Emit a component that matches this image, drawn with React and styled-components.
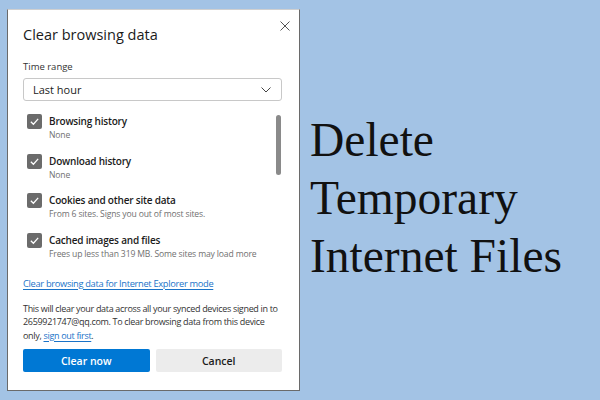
import React from "react";
import styled, { createGlobalStyle } from "styled-components";

const GlobalStyle = createGlobalStyle`
  html, body {
    margin: 0;
    padding: 0;
    background: #a3c3e5;
  }
  * { box-sizing: border-box; }
`;

const Page = styled.div`
  width: 600px;
  height: 400px;
  display: flex;
  align-items: flex-start;
  background: #a3c3e5;
  overflow: hidden;
`;

const Dialog = styled.div`
  position: relative;
  width: 293px;
  height: 382px;
  margin: 9px 0 0 7px;
  background: #fff;
  border: 1px solid #6a6a6a;
  border-top-color: #d0d0d0;
  padding: 15px 17px 0 15px;
  font-family: "Open Sans", "Noto Sans", sans-serif;
  color: #1b1b1b;
  display: flex;
  flex-direction: column;
`;

const CloseButton = styled.button`
  position: absolute;
  top: 7px;
  right: 5px;
  width: 18px;
  height: 18px;
  padding: 0;
  border: none;
  background: none;
  display: flex;
  align-items: center;
  justify-content: center;
`;

const Title = styled.h2`
  margin: 0;
  font-size: 14.5px;
  font-weight: 400;
  line-height: 20px;
  color: #1b1b1b;
`;

const FieldLabel = styled.div`
  margin-top: 15px;
  font-size: 9.5px;
  line-height: 13px;
  color: #333;
`;

const SelectBox = styled.div`
  margin-top: 5px;
  height: 23px;
  border: 1px solid #c8c8c8;
  border-radius: 3px;
  display: flex;
  align-items: center;
  justify-content: space-between;
  padding: 0 10px 0 9px;
  font-size: 11px;
  color: #1b1b1b;
`;

const ListArea = styled.div`
  position: relative;
  margin-top: 13px;
  display: flex;
  flex-direction: column;
  gap: 12.5px;
`;

const ScrollThumb = styled.div`
  position: absolute;
  right: 1px;
  top: 1px;
  width: 5px;
  height: 60px;
  border-radius: 3px;
  background: #8a8a8a;
`;

const Row = styled.div`
  display: flex;
  align-items: flex-start;
  gap: 7px;
  padding-left: 4px;
`;

const Box = styled.div`
  width: 15px;
  height: 15px;
  border-radius: 2px;
  background: #6b6b6b;
  display: flex;
  align-items: center;
  justify-content: center;
  flex-shrink: 0;
`;

const RowText = styled.div`
  display: flex;
  flex-direction: column;
`;

const RowTitle = styled.div`
  font-size: 10px;
  font-weight: 600;
  line-height: 15px;
  letter-spacing: -0.2px;
  color: #1b1b1b;
`;

const RowSub = styled.div`
  font-size: 8.6px;
  line-height: 12px;
  letter-spacing: -0.15px;
  color: #707070;
`;

const Link = styled.a`
  margin-top: 17px;
  font-size: 9.3px;
  font-weight: 500;
  line-height: 13px;
  letter-spacing: -0.32px;
  color: #1a73c8;
  text-decoration: underline;
  text-underline-offset: 2px;
`;

const Note = styled.p`
  margin: 12px 0 0;
  font-size: 9px;
  line-height: 13.5px;
  color: #333;
  letter-spacing: -0.32px;
  white-space: normal;

  a {
    color: #1a73c8;
    text-decoration: underline;
    text-underline-offset: 2px;
  }
`;

const Buttons = styled.div`
  margin-top: 7px;
  display: grid;
  grid-template-columns: 1fr 1fr;
  gap: 6px;
`;

const Button = styled.button`
  height: 23px;
  border: none;
  border-radius: 2px;
  font-family: "Open Sans", "Noto Sans", sans-serif;
  font-size: 10.5px;
  font-weight: 600;
  background: ${(p) => (p.$primary ? "#0078d4" : "#ececec")};
  color: ${(p) => (p.$primary ? "#fff" : "#1b1b1b")};
`;

const Heading = styled.h1`
  margin: 111px 0 0 10px;
  font-family: "Liberation Serif", "Times New Roman", serif;
  font-weight: 400;
  font-size: 47.5px;
  line-height: 58px;
  color: #111;
`;

const Check = () => (
  <svg width="11" height="11" viewBox="0 0 12 12">
    <path d="M2 6.3 L4.8 9 L10 3.2" fill="none" stroke="#fff" strokeWidth="1.4" />
  </svg>
);

const items = [
  { title: "Browsing history", sub: "None" },
  { title: "Download history", sub: "None" },
  { title: "Cookies and other site data", sub: "From 6 sites. Signs you out of most sites." },
  { title: "Cached images and files", sub: "Frees up less than 319 MB. Some sites may load more" },
];

export default function App() {
  return (
    <>
      <GlobalStyle />
      <Page>
        <Dialog>
          <CloseButton>
            <svg width="10" height="10" viewBox="0 0 10 10">
              <path d="M0.5 0.5 L9.5 9.5 M9.5 0.5 L0.5 9.5" stroke="#555" strokeWidth="1" />
            </svg>
          </CloseButton>
          <Title>Clear browsing data</Title>
          <FieldLabel>Time range</FieldLabel>
          <SelectBox>
            <span>Last hour</span>
            <svg width="10" height="6" viewBox="0 0 10 6">
              <path d="M0.5 0.5 L5 5 L9.5 0.5" fill="none" stroke="#444" strokeWidth="1" />
            </svg>
          </SelectBox>
          <ListArea>
            <ScrollThumb />
            {items.map((it) => (
              <Row key={it.title}>
                <Box>
                  <Check />
                </Box>
                <RowText>
                  <RowTitle>{it.title}</RowTitle>
                  <RowSub>{it.sub}</RowSub>
                </RowText>
              </Row>
            ))}
          </ListArea>
          <Link href="#">Clear browsing data for Internet Explorer mode</Link>
          <Note>
            This will clear your data across all your synced devices signed in to
            2659921747@qq.com. To clear browsing data from this device only,{" "}
            <a href="#">sign out first</a>.
          </Note>
          <Buttons>
            <Button $primary>Clear now</Button>
            <Button>Cancel</Button>
          </Buttons>
        </Dialog>
        <Heading>
          Delete
          <br />
          Temporary
          <br />
          Internet Files
        </Heading>
      </Page>
    </>
  );
}
